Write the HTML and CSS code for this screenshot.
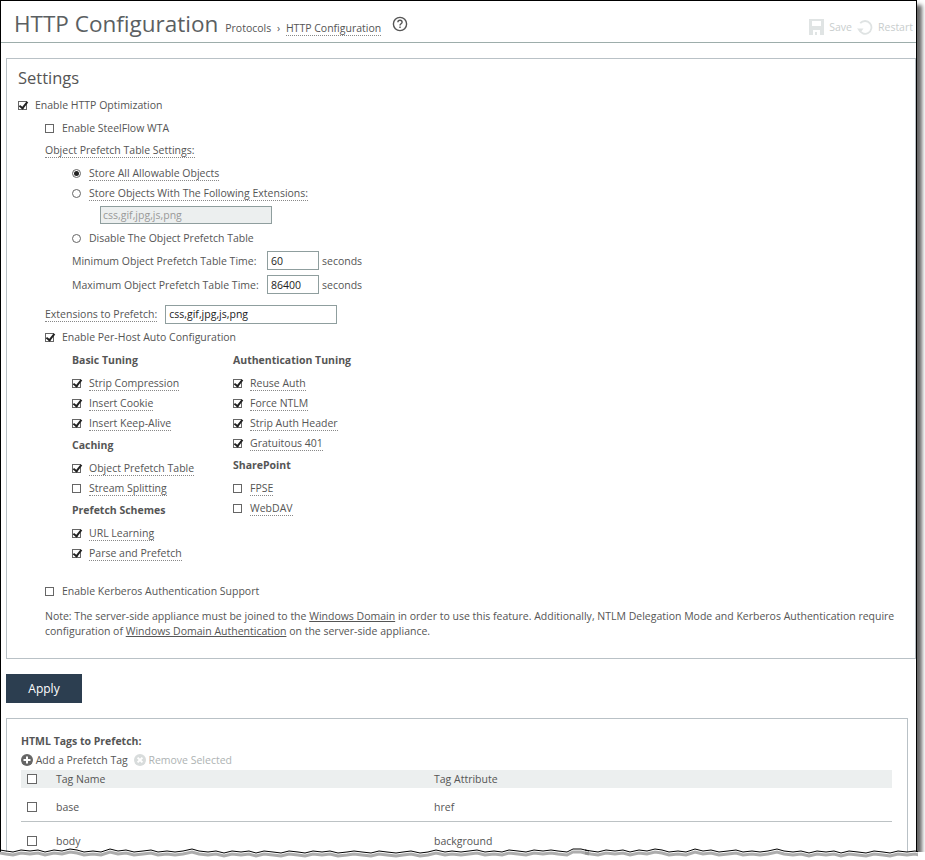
FILE: index.html

```html
<!DOCTYPE html>
<html lang="en">
<head>
  <meta charset="UTF-8" />
  <title>HTTP Configuration</title>
  <link rel="stylesheet" href="styles.css">
</head>
<body>
  <div class="frame">
    <div class="page-header">
      <h1 class="page-title">HTTP Configuration</h1>
      <div class="crumbs">
        <span>Protocols</span>
        <span class="crumb-sep">&rsaquo;</span>
        <span class="tip">HTTP Configuration</span>
      </div>
      <svg class="help" width="16" height="16" viewBox="0 0 16 16">
        <circle cx="8" cy="8" r="6.6" fill="none" stroke="#555" stroke-width="1.4"/>
        <path d="M5.9 6.3c0-1.3 1-2 2.1-2s2.1.7 2.1 1.9c0 1.5-2.1 1.6-2.1 3.2" fill="none" stroke="#555" stroke-width="1.4"/>
        <rect x="7.3" y="10.5" width="1.4" height="1.5" fill="#555"/>
      </svg>
      <div class="actions">
        <svg width="15" height="16" viewBox="0 0 15 16">
          <path d="M0 0h15v16H11v-5H4v5H0z" fill="#e0e4e4"/>
          <rect x="3" y="2" width="9" height="5" fill="#fff"/>
          <rect x="6" y="13" width="2" height="3" fill="#e0e4e4"/>
        </svg>
        <span class="action-label">Save</span>
        <svg width="16" height="16" viewBox="0 0 16 16">
          <path d="M3.2 4.2A6.4 6.4 0 1 1 2 10.5" fill="none" stroke="#dfe3e3" stroke-width="1.8"/>
          <path d="M0 9.5h6.5l-3 4z" fill="#dfe3e3"/>
        </svg>
        <span class="action-label">Restart</span>
      </div>
    </div>

    <div class="panel settings">
      <h2 class="panel-title">Settings</h2>
      <label class="row row-http"><input type="checkbox" checked>Enable HTTP Optimization</label>

      <div class="indent">
        <label class="row row-wta"><input type="checkbox">Enable SteelFlow WTA</label>
        <div class="row row-table"><span class="tip">Object Prefetch Table Settings:</span></div>

        <div class="indent-more">
          <label class="row row-store"><input type="radio" name="store" checked><span class="tip">Store All Allowable Objects</span></label>
          <label class="row row-ext"><input type="radio" name="store"><span class="tip">Store Objects With The Following Extensions:</span></label>
          <input class="text ext-disabled" type="text" value="css,gif,jpg,js,png" disabled>
          <label class="row row-disable"><input type="radio" name="store">Disable The Object Prefetch Table</label>
        </div>

        <div class="time-rows">
          <div class="row time-row">
            <span class="time-label">Minimum Object Prefetch Table Time:</span>
            <input class="text time-input" type="text" value="60">
            <span>seconds</span>
          </div>
          <div class="row time-row">
            <span class="time-label">Maximum Object Prefetch Table Time:</span>
            <input class="text time-input" type="text" value="86400">
            <span>seconds</span>
          </div>
        </div>

        <div class="row row-prefetch">
          <span class="tip">Extensions to Prefetch:</span>
          <input class="text prefetch-input" type="text" value="css,gif,jpg,js,png">
        </div>

        <label class="row row-host"><input type="checkbox" checked>Enable Per-Host Auto Configuration</label>

        <div class="tuning">
          <div class="tuning-col tuning-left">
            <h3 class="group-title">Basic Tuning</h3>
            <label class="row opt"><input type="checkbox" checked><span class="tip">Strip Compression</span></label>
            <label class="row opt"><input type="checkbox" checked><span class="tip">Insert Cookie</span></label>
            <label class="row opt"><input type="checkbox" checked><span class="tip">Insert Keep-Alive</span></label>
            <h3 class="group-title">Caching</h3>
            <label class="row opt"><input type="checkbox" checked><span class="tip">Object Prefetch Table</span></label>
            <label class="row opt"><input type="checkbox"><span class="tip">Stream Splitting</span></label>
            <h3 class="group-title">Prefetch Schemes</h3>
            <label class="row opt"><input type="checkbox" checked><span class="tip">URL Learning</span></label>
            <label class="row opt"><input type="checkbox" checked><span class="tip">Parse and Prefetch</span></label>
          </div>
          <div class="tuning-col">
            <h3 class="group-title">Authentication Tuning</h3>
            <label class="row opt"><input type="checkbox" checked><span class="tip">Reuse Auth</span></label>
            <label class="row opt"><input type="checkbox" checked><span class="tip">Force NTLM</span></label>
            <label class="row opt"><input type="checkbox" checked><span class="tip">Strip Auth Header</span></label>
            <label class="row opt"><input type="checkbox" checked><span class="tip">Gratuitous 401</span></label>
            <h3 class="group-title">SharePoint</h3>
            <label class="row opt"><input type="checkbox"><span class="tip">FPSE</span></label>
            <label class="row opt"><input type="checkbox"><span class="tip">WebDAV</span></label>
          </div>
        </div>

        <label class="row row-kerberos"><input type="checkbox">Enable Kerberos Authentication Support</label>
        <p class="note">Note: The server-side appliance must be joined to the <a href="#">Windows Domain</a> in order to use this feature. Additionally, NTLM Delegation Mode and Kerberos Authentication require configuration of <a href="#">Windows Domain Authentication</a> on the server-side appliance.</p>
      </div>
    </div>

    <button class="apply">Apply</button>

    <div class="panel tags">
      <div class="tags-title">HTML Tags to Prefetch:</div>
      <div class="tag-tools">
        <span class="tool">
          <svg width="12" height="12" viewBox="0 0 12 12">
            <circle cx="6" cy="6" r="6" fill="#666"/>
            <path d="M6 2.5v7M2.5 6h7" stroke="#fff" stroke-width="2"/>
          </svg>
          Add a Prefetch Tag
        </span>
        <span class="tool tool-off">
          <svg width="12" height="12" viewBox="0 0 12 12">
            <circle cx="6" cy="6" r="6" fill="#d8dcdc"/>
            <path d="M3.6 3.6l4.8 4.8M8.4 3.6l-4.8 4.8" stroke="#fff" stroke-width="2"/>
          </svg>
          Remove Selected
        </span>
      </div>
      <div class="tag-row tag-head">
        <input type="checkbox"><span class="tag-name">Tag Name</span><span>Tag Attribute</span>
      </div>
      <div class="tag-row tag-item tag-line">
        <input type="checkbox"><span class="tag-name">base</span><span>href</span>
      </div>
      <div class="tag-row tag-item">
        <input type="checkbox"><span class="tag-name">body</span><span>background</span>
      </div>
    </div>

    <svg class="torn" width="925" height="16" viewBox="0 0 925 16">
      <defs>
        <path id="edge" d="M0 4l6 1 7 1 8-2 9 1 8-1 7 2 9-2 8 1 8-2 7 1 7 2 9-1 8 1 9-3 8 2 8-1 8 2 9-1 8-1 7 2 9-1 8 1 8-1 9-2 7 2 9 1 8-1 8 2 8-2 9 1 8-1 7 2 8-2 9 1 8 1 8-2 9 1 7 1 8-2 9 1 8-1 8 2 9-1 7-1 8 1 9 1 8-2 8 1 9 1 7-1 8-1 9 2 8-1 8-2 9 2 7-1 9 1 8-1 8-1 8 2 9-1 8 1 7-2 9 1 8 1 8-2 9 1 8-1 7 1 9 1 6-3 8 0 8 2"/>
        <g id="tear">
          <use href="#edge" x="0" y="3" class="tear-shadow"/>
          <use href="#edge" x="0" y="0" class="tear-line"/>
        </g>
      </defs>
      <rect class="tear-back" x="0" y="6" width="925" height="10"/>
      <svg width="918" height="16" viewBox="0 0 918 16">
        <use href="#tear" x="0"/>
        <use href="#tear" x="585"/>
      </svg>
    </svg>
  </div>
</body>
</html>
```

FILE: styles.css

```css
html, body {
  margin: 0;
  padding: 0;
  background: #fff;
}
body {
  font-family: "Open Sans", sans-serif;
  font-size: 10.5px;
  color: #555;
  width: 925px;
  height: 860px;
  overflow: hidden;
}
.frame {
  position: relative;
  box-sizing: border-box;
  width: 917px;
  height: 852px;
  border-top: 1px solid #000;
  border-left: 1px solid #000;
  border-right: 1px solid #000;
  box-shadow: 5px 5px 4px #666;
}
.page-header {
  display: flex;
  align-items: center;
  height: 41px;
  border-bottom: 1px solid #9dadab;
  padding-left: 13px;
}
.page-title {
  margin: 4px 0 0;
  font-size: 22.5px;
  font-weight: 400;
  color: #5b5f62;
  white-space: nowrap;
}
.crumbs {
  margin: 13px 0 0 7px;
  white-space: nowrap;
}
.crumb-sep {
  margin: 0 3px;
}
.tip {
  border-bottom: 1px dotted #888;
}
.help {
  margin: 5px 0 0 11px;
}
.actions {
  display: flex;
  align-items: center;
  margin: 10px 0 0 auto;
  padding-right: 3px;
  color: #c8cdcd;
}
.action-label {
  margin: 0 5px;
}
.actions span:last-child {
  margin-right: 0;
}
.panel {
  box-sizing: border-box;
  border: 1px solid #b9c1c6;
}
.settings {
  width: 910px;
  height: 601px;
  margin: 15px 0 0 5px;
  padding: 7px 0 0 11px;
}
.panel-title {
  margin: 0;
  font-size: 16.5px;
  font-weight: 400;
  line-height: 24px;
  color: #555;
}
.row {
  display: flex;
  align-items: center;
  height: 18px;
  white-space: nowrap;
}
input[type="checkbox"], input[type="radio"] {
  appearance: none;
  position: relative;
  box-sizing: border-box;
  width: 9px;
  height: 9px;
  margin: 0 8px 0 0;
  flex: none;
  border: 1px solid #666;
  background: #fff;
}
input[type="checkbox"]:checked::after {
  content: "";
  position: absolute;
  left: 2px;
  top: -2px;
  width: 3px;
  height: 7px;
  border-right: 2px solid #222;
  border-bottom: 2px solid #222;
  transform: rotate(38deg);
}
input[type="radio"] {
  border-radius: 50%;
}
input[type="radio"]:checked::after {
  content: "";
  position: absolute;
  left: 1px;
  top: 1px;
  width: 5px;
  height: 5px;
  border-radius: 50%;
  background: #222;
}
.row-http {
  margin-top: 6px;
}
.indent {
  padding-left: 27px;
}
.row-wta {
  margin-top: 5px;
}
.row-table {
  margin-top: 4px;
}
.indent-more {
  padding-left: 27px;
}
.row-store {
  margin-top: 5px;
}
.row-ext {
  margin-top: 2px;
}
.text {
  box-sizing: border-box;
  font-family: "Open Sans", sans-serif;
  font-size: 10.5px;
  color: #222;
  border: 1px solid #8f9e9e;
  background: #fff;
  padding: 0 3px;
  outline: none;
  margin: 0;
}
.ext-disabled {
  display: block;
  width: 172px;
  height: 18px;
  margin: 4px 0 0 28px;
  padding-left: 2px;
  background: #ecefef;
  color: #999;
}
.row-disable {
  margin-top: 5px;
}
.time-rows {
  padding-left: 27px;
}
.time-row {
  height: 19px;
  margin-top: 5px;
}
.time-row:first-child {
  margin-top: 4px;
}
.time-label {
  width: 195px;
}
.time-input {
  width: 52px;
  height: 19px;
  margin-right: 3px;
}
.row-prefetch {
  margin-top: 11px;
}
.prefetch-input {
  width: 172px;
  height: 19px;
  margin-left: 8px;
}
.row-host {
  margin-top: 5px;
}
.tuning {
  display: flex;
  padding: 2px 0 0 27px;
}
.tuning-left {
  width: 161px;
}
.group-title {
  margin: 5px 0 6px;
  font-size: 10.5px;
  font-weight: 700;
  line-height: 14px;
  color: #555;
}
.opt {
  height: 20px;
}
.row-kerberos {
  margin-top: 19px;
}
.note {
  margin: 9px 10px 0 0;
  line-height: 15px;
}
.note a {
  color: #555;
}
.apply {
  display: block;
  width: 76px;
  height: 29px;
  margin: 15px 0 0 5px;
  border: 0;
  background: #2c3e50;
  color: #fff;
  font-family: "Open Sans", sans-serif;
  font-size: 12px;
}
.tags {
  width: 902px;
  height: 145px;
  margin: 15px 0 0 5px;
  padding: 15px 15px 0 14px;
}
.tags-title {
  font-weight: 700;
  line-height: 14px;
}
.tag-tools {
  display: flex;
  gap: 6px;
  margin-top: 5px;
  line-height: 14px;
}
.tool svg {
  vertical-align: -2px;
}
.tool-off {
  color: #aeb3b3;
}
.tag-row {
  display: flex;
  align-items: center;
  box-sizing: border-box;
  padding-left: 6px;
}
.tag-row input {
  margin-right: 0;
  width: 10px;
  height: 10px;
}
.tag-name {
  width: 378px;
  margin-left: 19px;
}
.tag-head {
  height: 18px;
  margin-top: 3px;
  background: #ecefef;
}
.tag-item {
  height: 34px;
  padding-top: 4px;
}
.tag-line {
  border-bottom: 1px solid #bcc2c4;
}
.torn {
  position: absolute;
  left: -1px;
  top: 845px;
}
.tear-back {
  fill: #fff;
}
.tear-shadow {
  fill: none;
  stroke: #8a8a8a;
  stroke-width: 3;
  opacity: .7;
}
.tear-line {
  fill: none;
  stroke: #000;
  stroke-width: 1;
}
```
